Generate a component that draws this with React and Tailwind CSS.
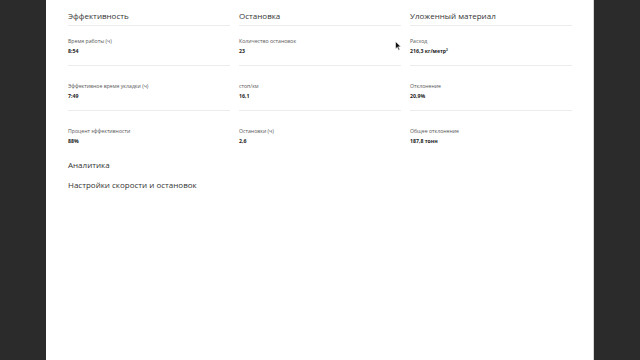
import React from 'react';

const columns = [
    {
        title: 'Эффективность',
        rows: [
            { label: 'Время работы (ч)', value: '8:54' },
            { label: 'Эффективное время укладки (ч)', value: '7:49' },
            { label: 'Процент эффективности', value: '88%' },
        ],
    },
    {
        title: 'Остановка',
        rows: [
            { label: 'Количество остановок', value: '23' },
            { label: 'стоп/км', value: '16,1' },
            { label: 'Остановки (ч)', value: '2,6' },
        ],
    },
    {
        title: 'Уложенный материал',
        rows: [
            { label: 'Расход', value: '216,3 кг/метр²' },
            { label: 'Отклонение', value: '20,9%' },
            { label: 'Общее отклонение', value: '187,8 тонн' },
        ],
    },
];

function StatColumn({ title, rows }) {
    return (
        <div className="flex flex-col">
            {/* Header */}
            <div className="pt-[10px] pb-[3px] border-b border-[#ececec]">
                <h2 className="text-[8px] leading-[12px] text-[#333]">{title}</h2>
            </div>
            {rows.map((row, i) => (
                <div
                    key={row.label}
                    className={`pb-[10px] ${i === 0 ? 'pt-[11px]' : 'pt-[16px]'} ${i < rows.length - 1 ? 'border-b border-[#ececec]' : ''}`}
                >
                    <div className="text-[5.2px] leading-[8px] text-[#555]">{row.label}</div>
                    <div className="mt-[2px] text-[5.2px] leading-[8px] font-bold text-[#222]">{row.value}</div>
                </div>
            ))}
        </div>
    );
}

export default function App() {
    return (
        <div className="relative h-[360px] w-[640px] bg-[#2b2b2b] font-['Open_Sans',sans-serif] overflow-hidden">
            <div className="ml-[46px] h-full w-[548px] bg-white border-r border-[#d6d6d6] px-[22px]">
                <div className="grid grid-cols-3 gap-x-[9px] w-[504px]">
                    {columns.map((col) => (
                        <StatColumn key={col.title} {...col} />
                    ))}
                </div>
                <h3 className="mt-[4px] text-[8px] leading-[12px] text-[#333]">Аналитика</h3>
                <h3 className="mt-[8px] text-[8px] leading-[12px] text-[#333]">Настройки скорости и остановок</h3>
            </div>

            {/* mouse pointer */}
            <svg className="absolute left-[395px] top-[41px]" width="7" height="10" viewBox="0 0 7 10">
                <path d="M0.5 0.5 L0.5 8 L2.3 6.3 L3.6 9.3 L4.8 8.8 L3.5 5.8 L6 5.8 Z" fill="#111" stroke="#fff" strokeWidth="0.6" />
            </svg>
        </div>
    );
}
